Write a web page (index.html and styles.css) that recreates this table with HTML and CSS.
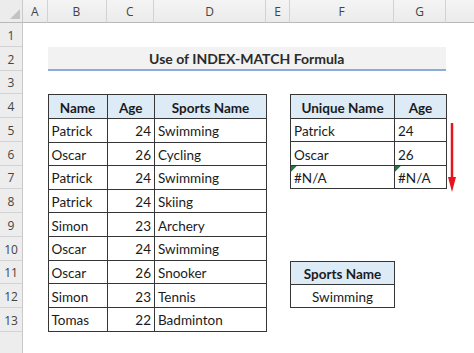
FILE: index.html
```html
<!DOCTYPE html>
<html>
<head>
<meta charset="utf-8">
<link rel="stylesheet" href="styles.css">
</head>
<body>
<div class="sheet">
  <div class="corner"><span class="corner-tri"></span></div>
  <div class="colhead">A</div>
  <div class="colhead">B</div>
  <div class="colhead">C</div>
  <div class="colhead">D</div>
  <div class="colhead">E</div>
  <div class="colhead">F</div>
  <div class="colhead">G</div>
  <div class="colhead colhead-last"></div>

  <div class="rowheads">
    <div class="rowhead">1</div>
    <div class="rowhead">2</div>
    <div class="rowhead">3</div>
    <div class="rowhead">4</div>
    <div class="rowhead">5</div>
    <div class="rowhead">6</div>
    <div class="rowhead">7</div>
    <div class="rowhead">8</div>
    <div class="rowhead">9</div>
    <div class="rowhead">10</div>
    <div class="rowhead">11</div>
    <div class="rowhead">12</div>
    <div class="rowhead">13</div>
    <div class="rowhead rowhead-fill"></div>
  </div>

  <div class="title">Use of INDEX-MATCH Formula</div>

  <table class="tbl t-main">
    <colgroup><col class="w-b"><col class="w-c"><col class="w-d"></colgroup>
    <tr class="hdr"><th>Name</th><th>Age</th><th>Sports Name</th></tr>
    <tr><td>Patrick</td><td class="num">24</td><td>Swimming</td></tr>
    <tr><td>Oscar</td><td class="num">26</td><td>Cycling</td></tr>
    <tr><td>Patrick</td><td class="num">24</td><td>Swimming</td></tr>
    <tr><td>Patrick</td><td class="num">24</td><td>Skiing</td></tr>
    <tr><td>Simon</td><td class="num">23</td><td>Archery</td></tr>
    <tr><td>Oscar</td><td class="num">24</td><td>Swimming</td></tr>
    <tr><td>Oscar</td><td class="num">26</td><td>Snooker</td></tr>
    <tr><td>Simon</td><td class="num">23</td><td>Tennis</td></tr>
    <tr><td>Tomas</td><td class="num">22</td><td>Badminton</td></tr>
  </table>

  <table class="tbl t-unique">
    <colgroup><col class="w-f"><col class="w-g"></colgroup>
    <tr class="hdr"><th>Unique Name</th><th>Age</th></tr>
    <tr><td>Patrick</td><td>24</td></tr>
    <tr><td>Oscar</td><td>26</td></tr>
    <tr><td class="err">#N/A</td><td class="err">#N/A</td></tr>
  </table>

  <table class="tbl t-sport">
    <colgroup><col class="w-f"></colgroup>
    <tr class="hdr"><th>Sports Name</th></tr>
    <tr><td class="center">Swimming</td></tr>
  </table>

  <div class="arrow-cell">
    <svg class="arrow" width="12" height="70" viewBox="0 0 12 70">
      <line x1="6" y1="0" x2="6" y2="56" stroke="#e8131d" stroke-width="2.5"/>
      <polygon points="2,54 10,54 6,69" fill="#e8131d"/>
    </svg>
  </div>
</div>
</body>
</html>
```

FILE: styles.css
```css
* { box-sizing: border-box; }

html, body {
  margin: 0;
  padding: 0;
  background: #ffffff;
}

.sheet {
  width: 474px;
  height: 353px;
  display: grid;
  grid-template-columns: 23px 24.5px 59px 47.5px 112px 24px 104px 52px 1fr;
  grid-template-rows: 23px repeat(13, 23.75px) 1fr;
  font-family: "Lato", "Liberation Sans", sans-serif;
  color: #1b1b1b;
  overflow: hidden;
}

.corner {
  grid-column: 1;
  grid-row: 1;
  background: #ececec;
  border-right: 1px solid #c9c9c9;
  border-bottom: 1px solid #b9b9b9;
  position: relative;
}

.corner-tri {
  position: absolute;
  right: 2px;
  bottom: 3px;
  width: 10px;
  height: 10px;
  background: #c3c3c3;
  clip-path: polygon(100% 0, 100% 100%, 0 100%);
}

.colhead {
  grid-row: 1;
  background: linear-gradient(#f4f4f4, #ebebeb);
  border-right: 1px solid #d2d2d2;
  border-bottom: 1px solid #b9b9b9;
  display: flex;
  align-items: center;
  justify-content: center;
  font-family: "Open Sans", "Liberation Sans", sans-serif;
  font-size: 12px;
  color: #444444;
  padding-top: 1px;
}

.colhead-last { border-right: none; }

.rowheads {
  grid-column: 1;
  grid-row: 2 / 16;
  display: grid;
  grid-template-rows: repeat(13, 23.75px) 1fr;
  background: #ededed;
  border-right: 1px solid #c9c9c9;
}

.rowhead {
  border-bottom: 1px solid #d3d3d3;
  display: flex;
  align-items: center;
  justify-content: center;
  font-family: "Open Sans", "Liberation Sans", sans-serif;
  font-size: 12px;
  color: #444444;
  padding-top: 2px;
}

.rowhead-fill { border-bottom: none; }

.title {
  grid-column: 3 / 9;
  grid-row: 3;
  background: #f2f2f2;
  border-bottom: 2.5px solid #8eaadb;
  display: flex;
  align-items: center;
  justify-content: center;
  font-weight: 700;
  font-size: 14px;
  color: #2b2b2b;
  padding-top: 1px;
}

.tbl {
  border-collapse: collapse;
  table-layout: fixed;
  width: 100%;
  height: 100%;
  font-size: 13.5px;
}

.tbl th, .tbl td {
  border: 1px solid #363636;
  padding: 2px 3px 0 3px;
  white-space: nowrap;
  overflow: hidden;
  vertical-align: middle;
  text-align: left;
  font-weight: 400;
}

.tbl .hdr th {
  background: #ddebf7;
  font-weight: 700;
  text-align: center;
}

.tbl td.num { text-align: right; }
.tbl td.center { text-align: center; }

.tbl td.err { position: relative; }
.tbl td.err::before {
  content: "";
  position: absolute;
  left: 0;
  top: 0;
  width: 6px;
  height: 6px;
  background: #1f7a3c;
  clip-path: polygon(0 0, 100% 0, 0 100%);
}

.t-main { grid-column: 3 / 6; grid-row: 5 / 15; }
.t-unique { grid-column: 7 / 9; grid-row: 5 / 9; }
.t-sport { grid-column: 7 / 8; grid-row: 12 / 14; }

.w-b { width: 59px; }
.w-c { width: 47.5px; }
.w-d { width: 112px; }
.w-f { width: 104px; }
.w-g { width: 52px; }

.arrow-cell {
  grid-column: 9;
  grid-row: 6 / 10;
}

.arrow {
  display: block;
  margin-top: 5px;
}
```
